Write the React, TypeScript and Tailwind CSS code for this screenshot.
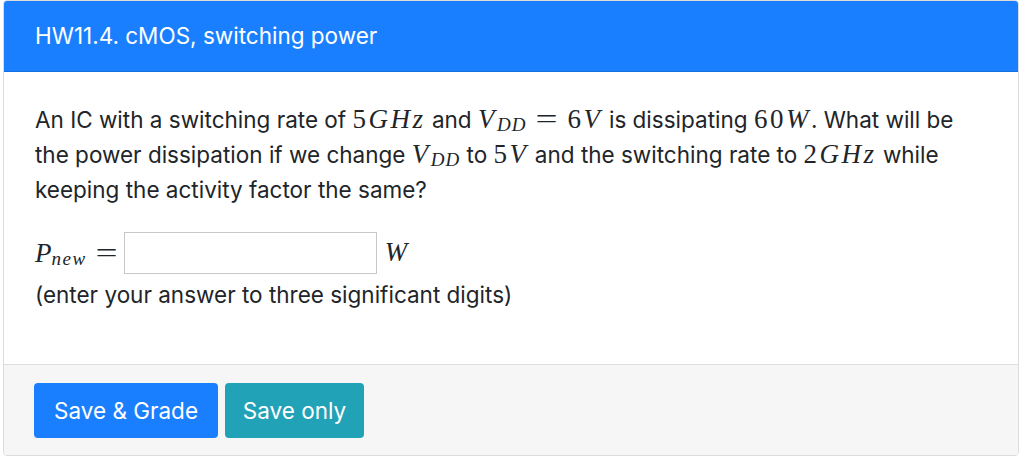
import React from "react"

const serif = { fontFamily: '"Liberation Serif", "DejaVu Serif", serif' }

const M = ({ children }: { children: React.ReactNode }) => (
  <span className="italic text-[27px] leading-none tracking-[2.5px]" style={serif}>
    {children}
  </span>
)

const N = ({ children }: { children: React.ReactNode }) => (
  <span className="not-italic" style={serif}>
    {children}
  </span>
)

const Sub = ({ children }: { children: React.ReactNode }) => (
  <sub className="italic text-[19px] tracking-[1px] relative top-[3px]" style={serif}>
    {children}
  </sub>
)

const Eq = ({ className = "mx-[13px]" }: { className?: string }) => (
  <span
    className={`inline-block not-italic text-[27px] leading-none scale-x-[1.45] ${className}`}
    style={serif}
  >
    =
  </span>
)

export default function App() {
  return (
    <div className="w-[1024px] h-[457px] bg-white font-['Inter',sans-serif] text-[#212529]">
      <div className="ml-[3px] w-[1016px] h-[456px] flex flex-col rounded-[4px] border border-[#dcdcdc] overflow-hidden">
        {/* Header */}
        <div className="h-[71px] bg-[#1a7fff] border-b border-[#146fdf] flex items-center pl-[31px] shrink-0">
          <h1 className="text-white text-[22.5px] pb-[1px]">HW11.4. cMOS, switching power</h1>
        </div>

        {/* Body */}
        <div className="flex-1 bg-white pl-[31px] pr-[30px] pt-[30px]">
          <p className="text-[22.5px] leading-[35px] w-[940px]">
            An IC with a switching rate of <M><N>5</N>GHz</M> and <M>V<Sub>DD</Sub></M>
            <Eq />
            <M><N>6</N>V</M> is dissipating <M><N>60</N>W</M>. What will be the power dissipation if we change{" "}
            <M>V<Sub>DD</Sub></M> to <M><N>5</N>V</M> and the switching rate to <M><N>2</N>GHz</M> while keeping the
            activity factor the same?
          </p>

          <div className="mt-[25px] flex items-center h-[42px]">
            <span className="italic text-[27px] leading-none" style={serif}>
              P
              <sub className="italic text-[19px] relative top-[3px] tracking-[1.5px]">new</sub>
            </span>
            <Eq className="ml-[12px] mr-[10px]" />
            <input
              type="text"
              className="w-[253px] h-[42px] border border-[#c8c8c8] bg-white outline-none"
            />
            <span className="ml-[8px]">
              <M>W</M>
            </span>
          </div>
          <p className="text-[22.5px] leading-[30px] mt-[6px]">(enter your answer to three significant digits)</p>
        </div>

        {/* Footer */}
        <div className="h-[91px] shrink-0 bg-[#f6f6f6] border-t border-[#dedede] flex items-start gap-[7px] pl-[30px] pt-[18px]">
          <button className="h-[55px] w-[184px] rounded-[4px] bg-[#1a7fff] text-white text-[22.5px]">Save &amp; Grade</button>
          <button className="h-[55px] w-[139px] rounded-[4px] bg-[#22a2b7] text-white text-[22.5px]">Save only</button>
        </div>
      </div>
    </div>
  )
}
